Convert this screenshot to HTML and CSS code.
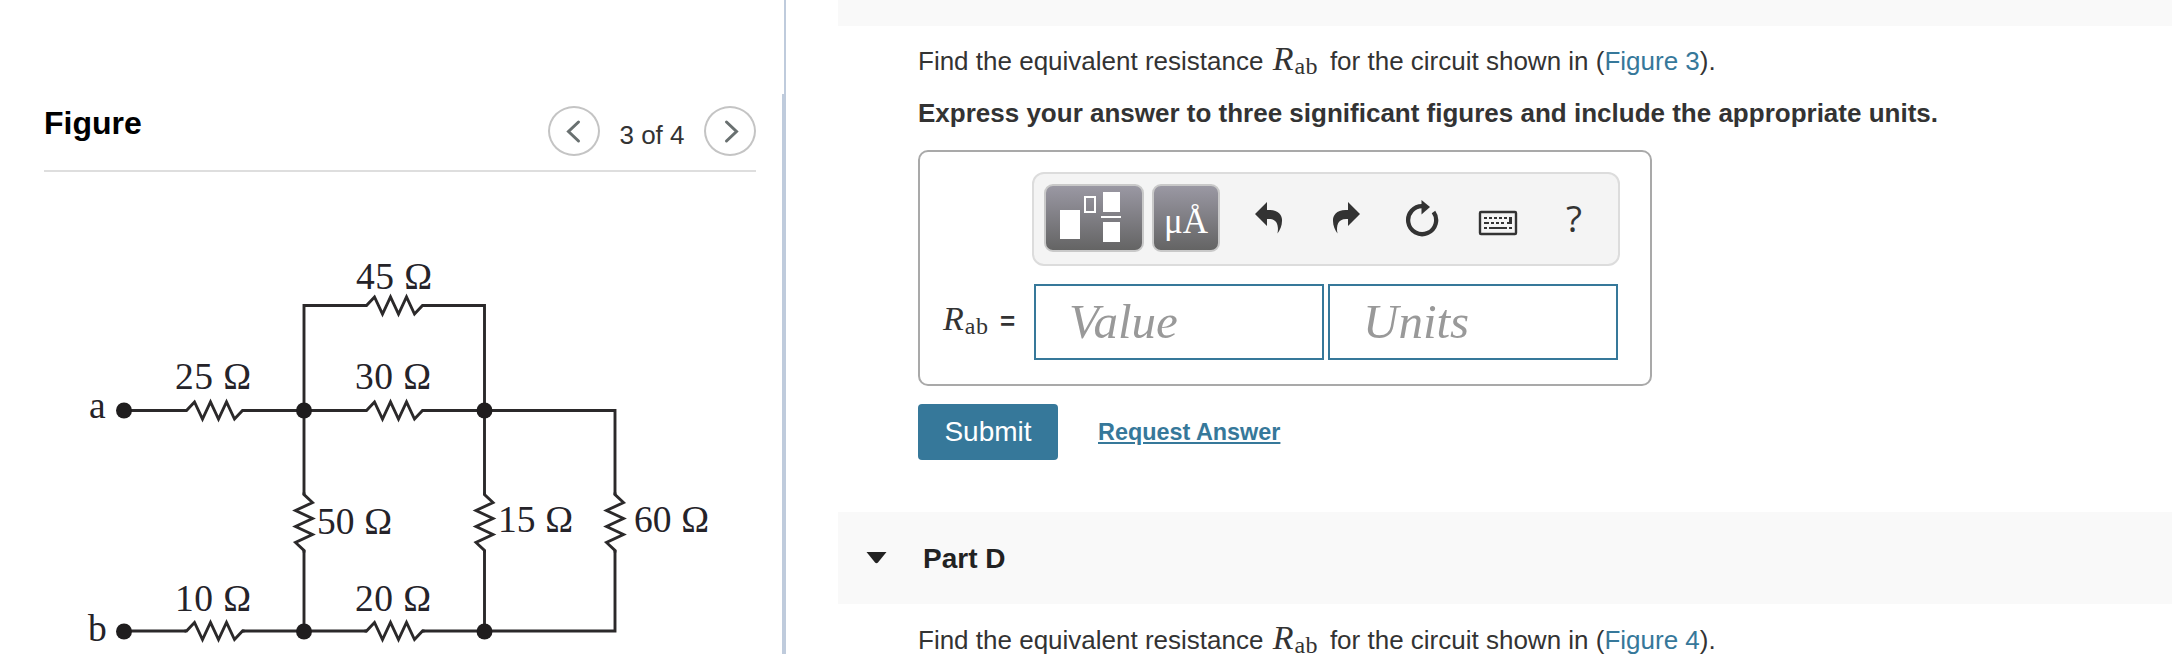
FILE: index.html
```
<!DOCTYPE html>
<html lang="en">
<head>
    <meta charset="utf-8">
    <title>Equivalent Resistance</title>
    <link rel="stylesheet" href="styles.css">
</head>
<body>
    <div class="page">
        <div class="left">
            <div class="left-top"></div>
            <div class="figure-panel">
                <div class="figure-header">
                    <h2>Figure</h2>
                    <div class="pager">
                        <button class="round">
                            <svg width="48" height="46" viewBox="0 0 48 46"><path d="M28.5 14 18.5 23.5 28.5 33"/></svg>
                        </button>
                        <span>3 of 4</span>
                        <button class="round">
                            <svg width="48" height="46" viewBox="0 0 48 46"><path d="M20.5 14 30.5 23.5 20.5 33"/></svg>
                        </button>
                    </div>
                </div>
                <svg class="circuit" width="712" height="482" viewBox="44 172 712 482">
                    <defs>
                        <path id="res" d="M-1 0H1L9 -8.500L17 8.500L25 -8.500L33 8.500L41 -8.500L49 8.500L57 0H59"/>
                    </defs>
                    <!-- wires -->
                    <g class="wire">
                        <path d="M124 410.500H186M242 410.500H367M422 410.500H615V495M615 550V631H422M367 631H242M186 631H124"/>
                        <path d="M304 495V305.500H367M422 305.500H484.500V495M484.500 550V631M304 550V631"/>
                        <!-- resistors -->
                        <use href="#res" x="185.500" y="410.500"/>
                        <use href="#res" x="365.500" y="410.500"/>
                        <use href="#res" x="365.500" y="305.500"/>
                        <use href="#res" x="185.500" y="631"/>
                        <use href="#res" x="365.500" y="631"/>
                        <use href="#res" transform="translate(304 493.500) rotate(90)"/>
                        <use href="#res" transform="translate(484.500 493.500) rotate(90)"/>
                        <use href="#res" transform="translate(615 493.500) rotate(90)"/>
                    </g>
                    <g class="dot">
                        <circle cx="124" cy="410.500" r="8"/>
                        <circle cx="304" cy="410.500" r="8"/>
                        <circle cx="484.500" cy="410.500" r="8"/>
                        <circle cx="124" cy="631.500" r="8"/>
                        <circle cx="304" cy="631.500" r="8"/>
                        <circle cx="484.500" cy="631.500" r="8"/>
                    </g>
                    <g class="label">
                        <text x="89" y="418">a</text>
                        <text x="88" y="641">b</text>
                        <text x="175" y="389" textLength="76">25 Ω</text>
                        <text x="356" y="289" textLength="76">45 Ω</text>
                        <text x="355" y="389" textLength="76">30 Ω</text>
                        <text x="317" y="534" textLength="75">50 Ω</text>
                        <text x="498" y="532" textLength="75">15 Ω</text>
                        <text x="634" y="532" textLength="75">60 Ω</text>
                        <text x="175" y="611" textLength="76">10 Ω</text>
                        <text x="355" y="611" textLength="76">20 Ω</text>
                    </g>
                </svg>
            </div>
        </div>

        <div class="right">
            <div class="part-bar part-c"></div>
            <div class="part-body">
                <p class="question">Find the equivalent resistance <span class="math"><i>R</i><span>ab</span></span> for the circuit shown in (<a href="#">Figure 3</a>).</p>
                <p class="instructions">Express your answer to three significant figures and include the appropriate units.</p>
                <div class="answer-box">
                    <div class="toolbar">
                        <button class="tool template">
                            <svg width="96" height="64" viewBox="0 0 96 64">
                                <path class="fill" d="M14 24h20v29H14zM57 6h17v20H57zM55 30h20v2H55zM57 36h17v20H57z"/>
                                <rect x="39" y="11" width="10" height="15"/>
                            </svg>
                        </button>
                        <button class="tool units">μÅ</button>
                        <div class="icons">
                            <svg width="28" height="34" viewBox="0 0 28 34"><path d="M0 13 12 1V9C23 8 27.500 14 27 20 27 25 25 29 22.500 32.500 24 24 22 17 12 18V25Z"/></svg>
                            <svg width="28" height="34" viewBox="0 0 28 34"><path d="M28 13 16 1V9C5 8 .5 14 1 20 1 25 3 29 5.500 32.500 4 24 6 17 16 18V25Z"/></svg>
                            <svg width="34" height="38" viewBox="0 0 34 38"><path class="stroke" d="M18 7.200A14 14 0 1 0 28.500 13"/><path d="M16.500 1 25 8 16.500 15.500Z"/></svg>
                            <svg class="keyboard" width="40" height="26" viewBox="0 0 40 26"><path class="stroke thin" d="M3 2H37Q38 2 38 3V23Q38 24 37 24H3Q2 24 2 23V3Q2 2 3 2Z"/><path d="M6 7h3v2H6zM11 7h3v2h-3zM16 7h3v2h-3zM21 7h3v2h-3zM26 7h3v2h-3zM31 7h3v7h-5v-2h2zM6 12h5v2H6zM13 12h3v2h-3zM18 12h3v2h-3zM23 12h3v2h-3zM6 17h3v2H6zM11 17h18v2H11zM31 17h3v2h-3z"/></svg>
                            <span class="help">?</span>
                        </div>
                    </div>
                    <div class="entry">
                        <label><span class="math"><i>R</i><span>ab</span></span><b>=</b></label>
                        <input type="text" placeholder="Value">
                        <input type="text" placeholder="Units">
                    </div>
                </div>
                <div class="actions">
                    <button class="submit">Submit</button>
                    <a href="#">Request Answer</a>
                </div>
            </div>
            <div class="part-bar part-d">
                <svg width="21" height="12" viewBox="0 0 21 12"><path d="M.5 0H20.500L12 10.500Q10.500 12 9 10.500Z"/></svg>
                <h3>Part D</h3>
            </div>
            <div class="part-body">
                <p class="question last">Find the equivalent resistance <span class="math"><i>R</i><span>ab</span></span> for the circuit shown in (<a href="#">Figure 4</a>).</p>
            </div>
        </div>
    </div>
</body>
</html>
```

FILE: styles.css
```
* {
    box-sizing: border-box;
}

body {
    margin: 0;
    font-family: "Liberation Sans", Arial, sans-serif;
    font-size: 26px;
    color: #333;
    background: #fff;
    overflow: hidden;
}

h2, h3, p {
    margin: 0;
}

button {
    padding: 0;
    font-family: inherit;
    cursor: pointer;
}

svg {
    display: block;
}

.page {
    display: flex;
    height: 654px;
    overflow: hidden;
}

/* figure side */
.left {
    width: 786px;
    flex: none;
}

.left-top {
    height: 94px;
    border-right: 2px solid #bfcbdc;
}

.figure-panel {
    height: 560px;
    padding: 0 26px 0 44px;
    border-right: 4px solid #bfcbdc;
}

.figure-header {
    display: flex;
    justify-content: space-between;
    height: 78px;
    border-bottom: 2px solid #dedede;
}

.figure-header h2 {
    font-size: 32px;
    line-height: 36px;
    padding-top: 11px;
    color: #000;
}

.pager {
    display: flex;
    padding-top: 12px;
}

.pager span {
    width: 104px;
    text-align: center;
    line-height: 30px;
    padding-top: 14px;
}

.round {
    width: 52px;
    height: 50px;
    border: 2px solid #c4c4c4;
    border-radius: 50%;
    background: #fff;
}

.round path {
    fill: none;
    stroke: #697070;
    stroke-width: 3;
    stroke-linecap: round;
}

.wire {
    fill: none;
    stroke: #2b292a;
    stroke-width: 2.9;
}

.dot {
    fill: #1f1d1e;
}

.label {
    font-family: "Liberation Serif", "Times New Roman", serif;
    font-size: 37.5px;
    fill: #252329;
}

/* question side */
.right {
    flex: 1;
    margin-left: 52px;
}

.part-bar {
    background: #f9f9f9;
}

.part-c {
    height: 26px;
}

.part-d {
    display: flex;
    align-items: center;
    height: 92px;
    padding-left: 28px;
    fill: #222;
}

.part-d h3 {
    margin-left: 36px;
    padding-top: 1px;
    font-size: 28px;
    line-height: 32px;
    color: #222;
}

.part-body {
    padding-left: 80px;
}

a {
    color: #36789a;
    text-decoration: none;
}

.question {
    height: 70px;
    padding-top: 18px;
    line-height: 30px;
    white-space: nowrap;
}

.question.last {
    padding-top: 19px;
}

.math {
    display: inline-block;
    width: 50px;
    margin-left: 2px;
    line-height: 30px;
    font-family: "Liberation Serif", "Times New Roman", serif;
    font-size: 34px;
}

.math span {
    position: relative;
    top: 4px;
    margin-left: 1px;
    font-size: 24px;
    line-height: 1;
    letter-spacing: 0.5px;
}

.instructions {
    height: 54px;
    padding-top: 2px;
    line-height: 30px;
    font-weight: bold;
    white-space: nowrap;
}

.answer-box {
    width: 734px;
    height: 236px;
    padding: 20px 0 0 14px;
    border: 2px solid #a9a9a9;
    border-radius: 10px;
}

.toolbar {
    display: flex;
    width: 588px;
    height: 94px;
    margin-left: 98px;
    padding: 10px;
    border: 2px solid #dcdcdc;
    border-radius: 12px;
    background: #f4f4f4;
}

.tool {
    height: 68px;
    border: 2px solid #c9c9c9;
    border-radius: 9px;
    background: linear-gradient(#9a98a3, #646464);
    color: #fff;
}

.template {
    width: 100px;
}

.template .fill {
    fill: #fff;
}

.template rect {
    fill: none;
    stroke: #fff;
    stroke-width: 2;
}

.units {
    width: 68px;
    margin-left: 8px;
    padding-top: 7px;
    font-family: "Liberation Serif", "Times New Roman", serif;
    font-size: 35px;
}

.icons {
    display: flex;
    align-items: flex-start;
    padding: 17px 0 0 35px;
    fill: #333;
}

.icons svg:nth-child(2) {
    margin-left: 49px;
}

.icons svg:nth-child(3) {
    margin: -2px 0 0 45px;
}

.icons .keyboard {
    margin: 9px 0 0 39px;
}

.icons .stroke {
    fill: none;
    stroke: #333;
    stroke-width: 4.3;
}

.icons .thin {
    stroke-width: 2.4;
}

.help {
    margin: -1px 0 0 48px;
    font-family: "Open Sans", sans-serif;
    font-size: 37px;
    line-height: 36px;
}

.entry {
    display: flex;
    margin-top: 18px;
}

.entry label {
    width: 100px;
    padding: 20px 0 0 7px;
    white-space: nowrap;
}

.entry b {
    margin-left: 7px;
}

.entry input {
    width: 290px;
    height: 76px;
    margin-right: 4px;
    padding: 0 0 2px 33px;
    border: 2px solid #36789a;
    border-radius: 0;
    font-family: "Liberation Serif", "Times New Roman", serif;
    font-size: 49px;
    font-style: italic;
}

.entry input::placeholder {
    color: #999;
}

.actions {
    display: flex;
    height: 126px;
    padding-top: 18px;
}

.submit {
    width: 140px;
    height: 56px;
    border: none;
    border-radius: 4px;
    background: #36789a;
    color: #fff;
    font-size: 28px;
}

.actions a {
    margin: 15px 0 0 40px;
    font-size: 23.4px;
    line-height: 26px;
    font-weight: bold;
    text-decoration: underline;
    text-decoration-thickness: 2px;
    text-underline-offset: 2px;
}
```
